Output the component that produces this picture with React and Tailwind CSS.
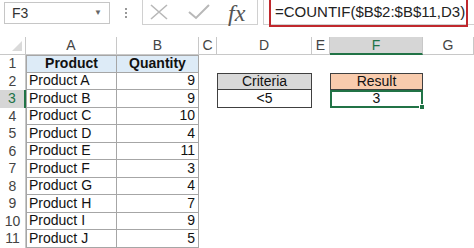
import React from "react";

const products = [
  ["Product A", 9],
  ["Product B", 9],
  ["Product C", 10],
  ["Product D", 4],
  ["Product E", 11],
  ["Product F", 3],
  ["Product G", 4],
  ["Product H", 7],
  ["Product I", 9],
  ["Product J", 5],
];

const columns = ["A", "B", "C", "D", "E", "F", "G"];

const RowHeader = ({ n }) => {
  const active = n === 3;
  return (
    <div
      className={
        "flex items-center justify-center text-[14px] text-[#444] border-r " +
        (active
          ? "bg-[#d6d6d6] border-r-2 border-[#217346] text-[#217346]"
          : "bg-white border-[#c8c8c8]")
      }
    >
      {n}
    </div>
  );
};

const App = () => {
  return (
    <div
      className="w-[474px] h-[248px] overflow-hidden bg-white text-[#111]"
      style={{ fontFamily: '"Liberation Sans", Arial, sans-serif' }}
    >
      {/* formula bar */}
      <div className="flex items-start h-[37px]">
        <div className="ml-[4px] mt-[2px] w-[106px] h-[22px] border border-[#c6c6c6] flex items-center justify-between px-[7px] text-[14px] text-[#333]">
          <span>F3</span>
          <span className="text-[8px] text-[#666]">▼</span>
        </div>
        <div className="w-[32px] h-[25px] flex flex-col items-center justify-center gap-[2px]">
          <span className="w-[2px] h-[2px] bg-[#999]" />
          <span className="w-[2px] h-[2px] bg-[#999]" />
          <span className="w-[2px] h-[2px] bg-[#999]" />
        </div>
        <div className="w-[116px] h-[25px] border border-t-0 border-[#d0d0d0] flex items-center">
          <svg width="22" height="16" viewBox="0 0 22 16" className="ml-[5px]">
            <path d="M3 1 L19 15 M19 1 L3 15" stroke="#b8b8b8" strokeWidth="1.6" fill="none" />
          </svg>
          <svg width="24" height="16" viewBox="0 0 24 16" className="ml-[17px]">
            <path d="M2 8 L9 14 L22 1" stroke="#b8b8b8" strokeWidth="2" fill="none" />
          </svg>
          <span
            className="ml-[17px] mt-[2px] text-[24px] italic text-[#555] leading-none"
            style={{ fontFamily: '"Liberation Serif", serif' }}
          >
            fx
          </span>
        </div>
        <div className="ml-[5px] flex-1 h-[25px] border-l border-b border-[#d0d0d0] pl-[5px] pr-[6px]">
          <div className="h-[27px] border-2 border-t-0 border-[#c0282d] flex items-center pl-[4px] text-[15px] text-[#222]">
            =COUNTIF($B$2:$B$11,D3)
          </div>
        </div>
      </div>

      {/* sheet grid */}
      <div className="grid grid-cols-[26px_91px_82px_18px_95px_18px_93px_51px] grid-rows-[18px_repeat(11,17.5px)] text-[14px]">
        {/* corner */}
        <div className="relative border-r border-b border-[#c8c8c8]">
          <div className="absolute right-[3px] bottom-[3px] w-0 h-0 border-l-[10px] border-l-transparent border-b-[10px] border-b-[#dadada]" />
        </div>
        {columns.map((c) => (
          <div
            key={c}
            className={
              "flex items-center justify-center text-[#444] " +
              (c === "F"
                ? "bg-[#d6d6d6] border-b-2 border-[#217346] text-[#217346] border-r border-r-[#c8c8c8]"
                : "border-b border-r border-[#c8c8c8]")
            }
          >
            {c}
          </div>
        ))}

        {/* row 1 */}
        <RowHeader n={1} />
        <div className="bg-[#ddebf7] border border-[#a6a6a6] font-bold flex items-center justify-center">
          Product
        </div>
        <div className="bg-[#ddebf7] border border-l-0 border-[#a6a6a6] font-bold flex items-center justify-center">
          Quantity
        </div>
        <div className="col-span-5" />

        {products.map(([name, qty], i) => {
          const n = i + 2;
          return (
            <React.Fragment key={name}>
              <RowHeader n={n} />
              <div className="border border-t-0 border-[#a6a6a6] flex items-center pl-[2px]">
                {name}
              </div>
              <div className="border-r border-b border-[#a6a6a6] flex items-center justify-end pr-[3px]">
                {qty}
              </div>
              <div />
              {n === 2 && (
                <div className="border border-[#404040] bg-[#d9d9d9] flex items-center justify-center">
                  Criteria
                </div>
              )}
              {n === 3 && (
                <div className="border border-t-0 border-[#404040] flex items-center justify-center">
                  &lt;5
                </div>
              )}
              {n > 3 && <div />}
              <div />
              {n === 2 && (
                <div className="border border-[#404040] bg-[#f8cbad] flex items-center justify-center">
                  Result
                </div>
              )}
              {n === 3 && (
                <div className="relative border-2 border-[#217346] flex items-center justify-center">
                  3
                  <div className="absolute right-[-4px] bottom-[-4px] w-[6px] h-[6px] bg-[#217346] border border-white" />
                </div>
              )}
              {n > 3 && <div />}
              <div />
            </React.Fragment>
          );
        })}
      </div>
    </div>
  );
};

export default App;
